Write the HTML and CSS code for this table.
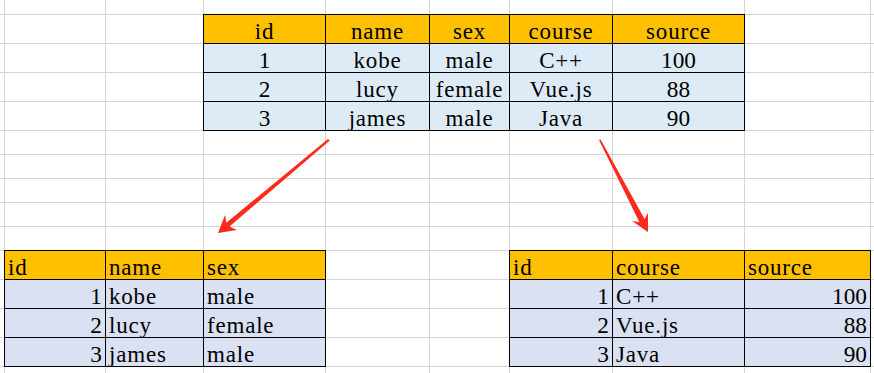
FILE: index.html
```html
<!DOCTYPE html>
<html>
<head>
<meta charset="utf-8">
<link rel="stylesheet" href="styles.css">
</head>
<body>
<div class="sheet">
  <div class="layer vlines">
    <div></div><div></div><div></div><div></div><div></div>
    <div></div><div></div><div></div><div></div><div></div>
  </div>
  <div class="layer hlines">
    <div></div><div></div><div></div><div></div><div></div>
    <div></div><div></div><div></div><div></div><div></div>
    <div></div><div></div><div></div><div></div><div></div>
  </div>
  <div class="layer content">
    <div class="tbl tbl-top">
      <div class="row head">
        <div class="cell">id</div><div class="cell">name</div><div class="cell">sex</div><div class="cell">course</div><div class="cell">source</div>
      </div>
      <div class="row body">
        <div class="cell num">1</div><div class="cell">kobe</div><div class="cell">male</div><div class="cell">C++</div><div class="cell num">100</div>
      </div>
      <div class="row body">
        <div class="cell num">2</div><div class="cell">lucy</div><div class="cell">female</div><div class="cell">Vue.js</div><div class="cell num">88</div>
      </div>
      <div class="row body">
        <div class="cell num">3</div><div class="cell">james</div><div class="cell">male</div><div class="cell">Java</div><div class="cell num">90</div>
      </div>
    </div>

    <div class="tbl tbl-left">
      <div class="row head">
        <div class="cell">id</div><div class="cell">name</div><div class="cell">sex</div>
      </div>
      <div class="row body">
        <div class="cell num">1</div><div class="cell">kobe</div><div class="cell">male</div>
      </div>
      <div class="row body">
        <div class="cell num">2</div><div class="cell">lucy</div><div class="cell">female</div>
      </div>
      <div class="row body">
        <div class="cell num">3</div><div class="cell">james</div><div class="cell">male</div>
      </div>
    </div>

    <div class="tbl tbl-right">
      <div class="row head">
        <div class="cell">id</div><div class="cell">course</div><div class="cell">source</div>
      </div>
      <div class="row body">
        <div class="cell num">1</div><div class="cell">C++</div><div class="cell num">100</div>
      </div>
      <div class="row body">
        <div class="cell num">2</div><div class="cell">Vue.js</div><div class="cell num">88</div>
      </div>
      <div class="row body">
        <div class="cell num">3</div><div class="cell">Java</div><div class="cell num">90</div>
      </div>
    </div>
  </div>

  <svg class="arrows" width="874" height="373" viewBox="0 0 874 373" aria-hidden="true">
    <polygon points="328,139 329.8,140.5 229.5,226.4 237,230 218,233 225,215 226.3,222.7" fill="#ff2a1c"/>
    <polygon points="599,140 600.6,139.4 644.6,219.1 648,213 648,232 632,221 639.3,221.9" fill="#ff2a1c"/>
  </svg>
</div>
</body>
</html>
```

FILE: styles.css
```css
* { box-sizing: border-box; }

html, body {
  margin: 0;
  padding: 0;
  background: #ffffff;
}

.sheet {
  --cols: 4px 101px 98px 122px 104px 80px 103px 132px 126px 1fr;
  --rows: 14px 29px 29px 29px 29px 24px 24px 24px 24px 24px 29px 29px 29px 29px 1fr;
  position: relative;
  display: grid;
  width: 874px;
  height: 373px;
  overflow: hidden;
  font-family: "Liberation Serif", "Noto Sans CJK SC", serif;
  color: #000;
}

.layer {
  grid-area: 1 / 1;
  display: grid;
  min-height: 0;
}

.vlines {
  grid-template-columns: var(--cols);
}

.vlines > div + div {
  border-left: 1px solid #d4d4d4;
}

.hlines {
  grid-template-rows: var(--rows);
}

.hlines > div + div {
  border-top: 1px solid #d4d4d4;
}

.content {
  grid-template-columns: var(--cols);
  grid-template-rows: var(--rows);
}

.tbl {
  display: grid;
  grid-template-rows: repeat(4, 29px);
  margin-right: -1px;
  margin-bottom: -1px;
  border-right: 1px solid #000;
  border-bottom: 1px solid #000;
  z-index: 1;
}

.tbl-top {
  grid-column: 4 / 9;
  grid-row: 2 / 6;
  grid-template-columns: 122px 104px 80px 103px 132px;
}

.tbl-left {
  grid-column: 2 / 5;
  grid-row: 11 / 15;
  grid-template-columns: 101px 98px 122px;
}

.tbl-right {
  grid-column: 7 / 10;
  grid-row: 11 / 15;
  grid-template-columns: 103px 132px 126px;
}

.row {
  display: contents;
}

.cell {
  display: flex;
  align-items: flex-end;
  border-left: 1px solid #000;
  border-top: 1px solid #000;
  font-size: 23px;
  line-height: 23px;
  letter-spacing: 0.8px;
  padding: 0 3px 0 3px;
  white-space: nowrap;
  overflow: hidden;
}

.num {
  font-size: 23.3px;
  letter-spacing: 0;
}

.head > .cell {
  background: #ffc000;
}

.tbl-top .body > .cell {
  background: #ddebf7;
}

.tbl-left .body > .cell,
.tbl-right .body > .cell {
  background: #d9e1f2;
}

.tbl-top .cell {
  justify-content: center;
  padding: 0;
}

.tbl-left .num,
.tbl-right .num {
  justify-content: flex-end;
}

.arrows {
  position: absolute;
  left: 0;
  top: 0;
  pointer-events: none;
  z-index: 2;
}
```
